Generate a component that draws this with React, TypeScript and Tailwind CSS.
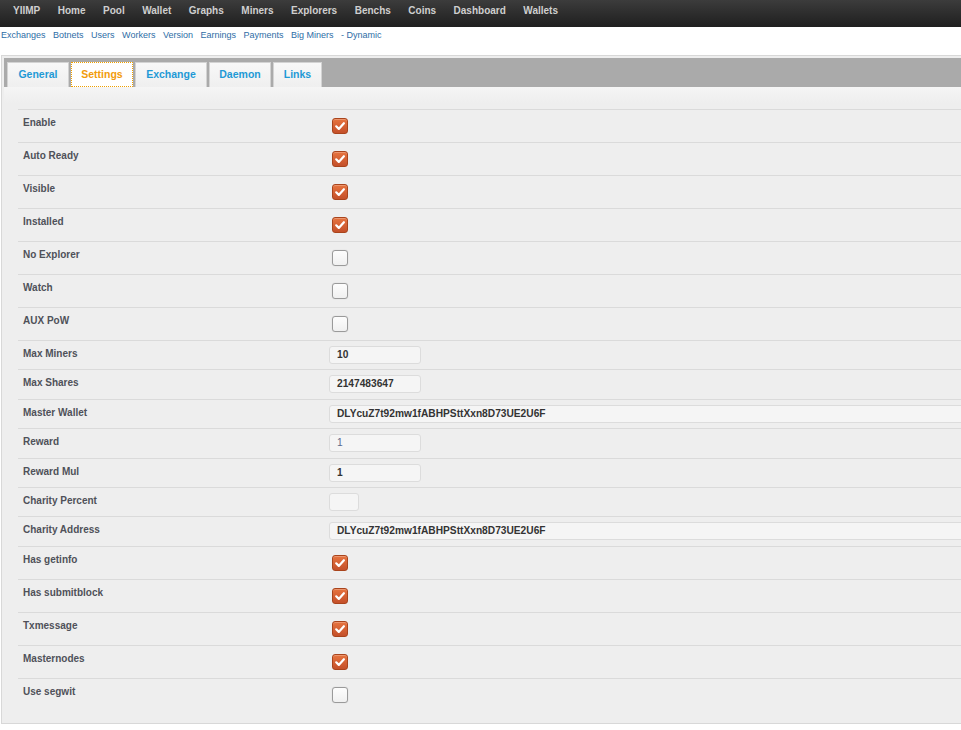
import React from "react";

type Row =
  | { label: string; kind: "check"; checked: boolean }
  | { label: string; kind: "input"; value: string; width: string; muted?: boolean };

const rows: Row[] = [
  { label: "Enable", kind: "check", checked: true },
  { label: "Auto Ready", kind: "check", checked: true },
  { label: "Visible", kind: "check", checked: true },
  { label: "Installed", kind: "check", checked: true },
  { label: "No Explorer", kind: "check", checked: false },
  { label: "Watch", kind: "check", checked: false },
  { label: "AUX PoW", kind: "check", checked: false },
  { label: "Max Miners", kind: "input", value: "10", width: "w-[92px]" },
  { label: "Max Shares", kind: "input", value: "2147483647", width: "w-[92px]" },
  { label: "Master Wallet", kind: "input", value: "DLYcuZ7t92mw1fABHPSttXxn8D73UE2U6F", width: "w-[760px]" },
  { label: "Reward", kind: "input", value: "1", width: "w-[92px]", muted: true },
  { label: "Reward Mul", kind: "input", value: "1", width: "w-[92px]" },
  { label: "Charity Percent", kind: "input", value: "", width: "w-[30px]" },
  { label: "Charity Address", kind: "input", value: "DLYcuZ7t92mw1fABHPSttXxn8D73UE2U6F", width: "w-[760px]" },
  { label: "Has getinfo", kind: "check", checked: true },
  { label: "Has submitblock", kind: "check", checked: true },
  { label: "Txmessage", kind: "check", checked: true },
  { label: "Masternodes", kind: "check", checked: true },
  { label: "Use segwit", kind: "check", checked: false },
];

const nav = ["YIIMP", "Home", "Pool", "Wallet", "Graphs", "Miners", "Explorers", "Benchs", "Coins", "Dashboard", "Wallets"];
const sub = ["Exchanges", "Botnets", "Users", "Workers", "Version", "Earnings", "Payments", "Big Miners", "- Dynamic"];
const tabs: { name: string; w: string }[] = [
  { name: "General", w: "w-[62px]" },
  { name: "Settings", w: "w-[62px]" },
  { name: "Exchange", w: "w-[72px]" },
  { name: "Daemon", w: "w-[62px]" },
  { name: "Links", w: "w-[49px]" },
];

function Check({ checked }: { checked: boolean }) {
  if (checked) {
    return (
      <span className="flex h-4 w-4 items-center justify-center rounded-[3px] border border-[#a9441c] bg-gradient-to-b from-[#e7743f] to-[#c4502a] shadow-[inset_0_1px_0_rgba(255,255,255,0.25)]">
        <svg width="12" height="12" viewBox="0 0 12 12">
          <path d="M2.2 6.3 L4.8 8.9 L9.9 3.2" fill="none" stroke="#fff" strokeWidth="2.2" strokeLinecap="round" strokeLinejoin="round" />
        </svg>
      </span>
    );
  }
  return (
    <span className="block h-4 w-4 rounded-[3px] border border-[#9a9a9a] bg-gradient-to-b from-[#fdfdfd] to-[#f0f0f0] shadow-[0_0_1px_rgba(0,0,0,0.2)]" />
  );
}

export default function App() {
  return (
    <div className="w-[961px] h-[730px] overflow-hidden bg-white font-['Liberation_Sans',Arial,sans-serif]">
      <div className="flex h-[27px] items-start gap-[1.5px] bg-gradient-to-b from-[#3c3c3c] to-[#1f1f1f] pl-[5px] pt-[5px]">
        {nav.map((n) => (
          <span key={n} className="px-2 text-[10px] font-bold leading-[12px] text-[#cfcfcf]">
            {n}
          </span>
        ))}
      </div>
      <div className="mt-[3px] flex gap-[7.5px] pl-px text-[9px] leading-[11px] text-[#2e6da6]">
        {sub.map((s) => (
          <span key={s}>{s}</span>
        ))}
      </div>
      <div className="ml-px mt-[14px] w-[1200px] border border-[#d8d8d8] bg-[#eeeeee] p-[2px]">
        <div className="flex h-[29px] gap-[2px] bg-[#aaaaaa] pl-[3px] pt-[4px]">
          {tabs.map((t) =>
            t.name === "Settings" ? (
              <div
                key={t.name}
                className={`flex h-[25px] items-center justify-center border border-dotted border-[#f0a000] bg-white text-[10.5px] font-bold text-[#f29b0a] ${t.w}`}
              >
                {t.name}
              </div>
            ) : (
              <div
                key={t.name}
                className={`flex h-[25px] items-center justify-center border border-b-0 border-[#d3d3d3] bg-gradient-to-b from-[#f8f8f8] to-[#efefef] text-[10.5px] font-bold text-[#1f9ad6] ${t.w}`}
              >
                {t.name}
              </div>
            )
          )}
        </div>
        <div className="bg-[linear-gradient(#f5f5f5,#eeeeee_16px)] pb-[10px] pl-[14px] pt-[22px]">
          {rows.map((r) => (
            <div key={r.label} className="flex border-t border-[#dadada]">
              <div className="w-[311px] shrink-0 pl-[5px] pt-[7px] text-[10px] font-bold leading-[12px] text-[#4f5159]">
                {r.label}
              </div>
              {r.kind === "check" ? (
                <div className="py-[8px] pl-[3px]">
                  <Check checked={r.checked} />
                </div>
              ) : (
                <div className="pb-[5.4px] pt-[5px]">
                  <div
                    className={`flex h-[18px] items-center rounded-[3px] border border-[#dcdcdc] bg-[#f5f5f5] pl-[7px] text-[10.2px] leading-[12px] ${r.width} ${
                      r.muted ? "font-normal text-[#5b6a8c]" : "font-bold text-[#333]"
                    }`}
                  >
                    {r.value}
                  </div>
                </div>
              )}
            </div>
          ))}
        </div>
      </div>
    </div>
  );
}
